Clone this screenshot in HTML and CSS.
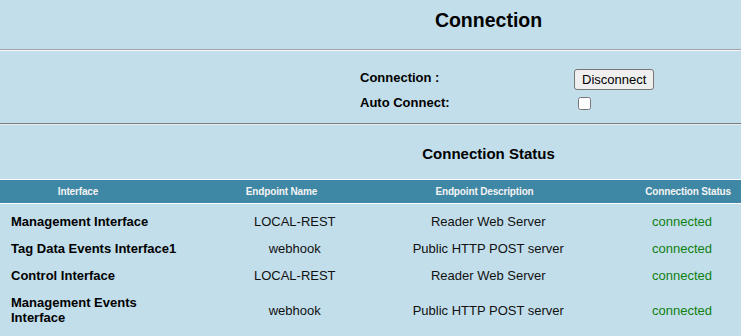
FILE: index.html
```html
<!DOCTYPE html>
<html lang="en">
<head>
    <title>Connection</title>
    <meta charset="UTF-8" />
    <meta name="viewport" content="width=device-width, initial-scale=1.0" />
    <link rel="stylesheet" href="styles.css">
</head>
<body>
    <div class="page">
        <h2 class="page-title">Connection</h2>
        <hr class="rule rule-light">

        <div class="conn-form">
            <label class="form-label" for="disconnectBtn">Connection :</label>
            <div class="form-control">
                <button class="btn" id="disconnectBtn" type="button">Disconnect</button>
            </div>
            <label class="form-label" for="autoConnect">Auto Connect:</label>
            <div class="form-control">
                <input class="check" type="checkbox" id="autoConnect">
            </div>
        </div>

        <hr class="rule rule-dark">

        <h3 class="section-title">Connection Status</h3>

        <div class="status-table">
            <div class="head-row">
                <div class="head-cell head-first">Interface</div>
                <div class="head-cell">Endpoint Name</div>
                <div class="head-cell">Endpoint Description</div>
                <div class="head-cell head-last">Connection Status</div>
            </div>

            <div class="body-rows">
                <div class="row">
                    <div class="cell cell-name">Management Interface</div>
                    <div class="cell">LOCAL-REST</div>
                    <div class="cell">Reader Web Server</div>
                    <div class="cell cell-ok">connected</div>
                </div>
                <div class="row">
                    <div class="cell cell-name">Tag Data Events Interface1</div>
                    <div class="cell">webhook</div>
                    <div class="cell">Public HTTP POST server</div>
                    <div class="cell cell-ok">connected</div>
                </div>
                <div class="row">
                    <div class="cell cell-name">Control Interface</div>
                    <div class="cell">LOCAL-REST</div>
                    <div class="cell">Reader Web Server</div>
                    <div class="cell cell-ok">connected</div>
                </div>
                <div class="row">
                    <div class="cell cell-name">Management Events Interface</div>
                    <div class="cell">webhook</div>
                    <div class="cell">Public HTTP POST server</div>
                    <div class="cell cell-ok">connected</div>
                </div>
            </div>
        </div>
    </div>
</body>
</html>
```

FILE: styles.css
```css
html, body {
    margin: 0;
    padding: 0;
}

body {
    font-family: "Liberation Sans", Arial, sans-serif;
    font-size: 13px;
    color: #111;
    background: #c2deeb;
}

.page {
    width: 100%;
}

/* titles sit centred over the right-hand part of the page */
.page-title {
    margin: 0;
    padding: 9px 0 17px 236px;
    font-size: 19.5px;
    font-weight: bold;
    text-align: center;
    color: #000;
}

.rule {
    margin: 0;
    height: 0;
    border: none;
}

.rule-light {
    border-top: 1px solid #a2a2a2;
    border-bottom: 1px solid #f4f9fb;
}

.rule-dark {
    border-top: 1px solid #7c7c7c;
    border-bottom: 1px solid #e2eef4;
}

/* Connection form */
.conn-form {
    display: grid;
    grid-template-columns: 214px auto;
    row-gap: 4px;
    align-items: start;
    margin: 18px 0 10px 360px;
}

.form-label {
    font-weight: bold;
    padding-top: 1px;
    line-height: 15px;
    color: #000;
}

.btn {
    font-family: "Liberation Sans", Arial, sans-serif;
    font-size: 13px;
    line-height: 15px;
    color: #000;
    background: #efefef;
    border: 1px solid #767676;
    border-radius: 3px;
    padding: 2px 7px;
    margin: 0;
    cursor: pointer;
    display: block;
}

.check {
    width: 13px;
    height: 13px;
    margin: 3px 3px 3px 4px;
    display: block;
}

.section-title {
    margin: 0;
    padding: 20px 0 17px 236px;
    font-size: 15px;
    font-weight: bold;
    text-align: center;
    color: #000;
}

/* Status table */
.head-row {
    display: grid;
    grid-template-columns: 180px 203px 203px 1fr;
    align-items: center;
    height: 23px;
    background: #3e87a5;
    border-top: 1px solid #fff;
    border-bottom: 1px solid #fff;
}

.head-cell {
    font-size: 10px;
    font-weight: bold;
    letter-spacing: -0.15px;
    color: #f4f4f4;
    text-align: center;
    white-space: nowrap;
}

.head-first {
    padding-right: 24px;
}

.head-last {
    text-align: right;
    padding-right: 10px;
}

.body-rows {
    padding-top: 4px;
}

.row {
    display: grid;
    grid-template-columns: 198px 193.5px 193.5px 1fr;
    align-items: center;
    padding: 6px 0;
    line-height: 15px;
}

.cell {
    text-align: center;
}

.cell-name {
    text-align: left;
    font-weight: bold;
    padding: 0 11px;
    color: #000;
}

.cell-ok {
    color: #108010;
    padding-left: 38px;
}
```
